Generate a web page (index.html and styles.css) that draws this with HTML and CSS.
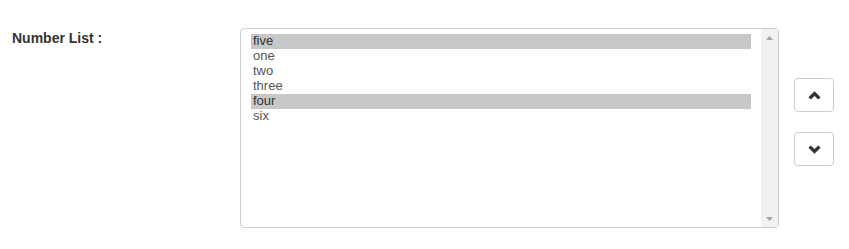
FILE: index.html
```html
<!DOCTYPE html>
<html>
<head>
<meta charset="utf-8">
<link rel="stylesheet" href="styles.css">
</head>
<body>
<div class="form-row">
  <div class="field-label">Number List :</div>
  <div class="listbox">
    <div class="options">
      <div class="option selected">five</div>
      <div class="option">one</div>
      <div class="option">two</div>
      <div class="option">three</div>
      <div class="option selected">four</div>
      <div class="option">six</div>
    </div>
    <div class="scrollbar">
      <div class="scroll-btn">
        <svg width="7" height="4" viewBox="0 0 7 4"><polygon points="3.5,0 7,4 0,4" fill="#a3a3a3"/></svg>
      </div>
      <div class="scroll-btn">
        <svg width="7" height="4" viewBox="0 0 7 4"><polygon points="0,0 7,0 3.5,4" fill="#a3a3a3"/></svg>
      </div>
    </div>
  </div>
  <div class="move-buttons">
    <button class="move-btn" type="button" aria-label="Move up">
      <svg width="13" height="9" viewBox="0 0 13 9"><polyline points="1.6,7.4 6.5,2.5 11.4,7.4" fill="none" stroke="#333" stroke-width="3.3"/></svg>
    </button>
    <button class="move-btn" type="button" aria-label="Move down">
      <svg width="13" height="9" viewBox="0 0 13 9"><polyline points="1.6,1.6 6.5,6.5 11.4,1.6" fill="none" stroke="#333" stroke-width="3.3"/></svg>
    </button>
  </div>
</div>
</body>
</html>
```
FILE: styles.css
```css
html, body {
  margin: 0;
  padding: 0;
  background: #fff;
}

body {
  font-family: "Liberation Sans", Arial, sans-serif;
  color: #333;
}

.form-row {
  display: flex;
  align-items: flex-start;
  padding: 28px 0 0 12px;
}

.field-label {
  width: 228px;
  padding-top: 0;
  font-size: 14px;
  line-height: 20px;
  font-weight: bold;
  color: #333;
}

.listbox {
  box-sizing: border-box;
  width: 539px;
  height: 200px;
  border: 1px solid #ccc;
  border-radius: 4px;
  display: flex;
  overflow: hidden;
  background: #fff;
}

.options {
  flex: 1;
  padding: 5px 10px;
}

.option {
  height: 15px;
  line-height: 14px;
  padding: 0 2px;
  font-size: 13px;
  color: #555;
  white-space: nowrap;
}

.option.selected {
  background: #c8c8c8;
  color: #333;
}

.scrollbar {
  width: 17px;
  background: #f1f1f1;
  display: flex;
  flex-direction: column;
  justify-content: space-between;
}

.scroll-btn {
  height: 17px;
  display: flex;
  align-items: center;
  justify-content: center;
}

.scroll-btn svg {
  display: block;
}

.move-buttons {
  display: flex;
  flex-direction: column;
  gap: 20px;
  margin-left: 15px;
  margin-top: 50px;
}

.move-btn {
  box-sizing: border-box;
  width: 40px;
  height: 34px;
  padding: 0;
  border: 1px solid #ccc;
  border-radius: 4px;
  background: #fff;
  display: flex;
  align-items: center;
  justify-content: center;
  cursor: pointer;
}

.move-btn svg {
  display: block;
}
```
